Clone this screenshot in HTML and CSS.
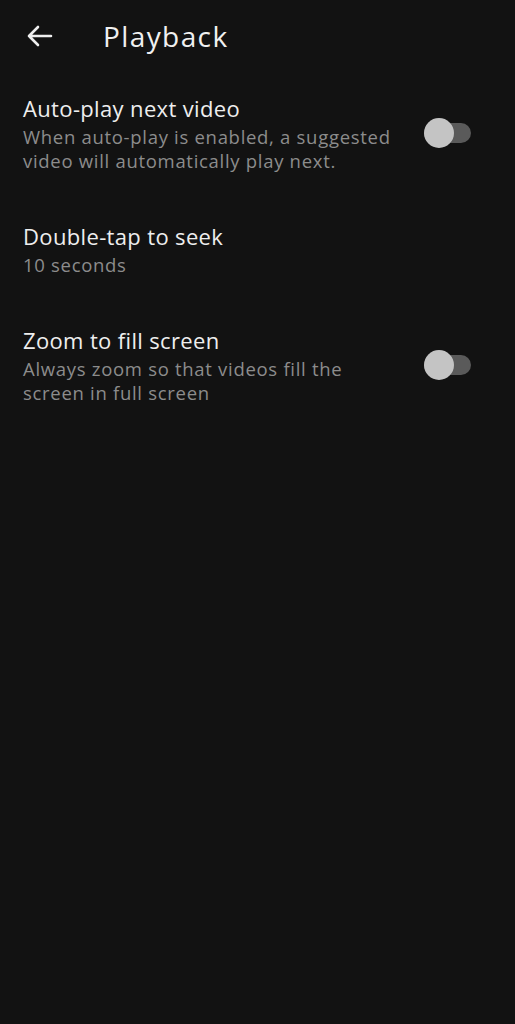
FILE: index.html
```html
<!DOCTYPE html>
<html>
<head>
<meta charset="utf-8">
<link rel="stylesheet" href="styles.css">
</head>
<body>
<div class="screen">
  <header class="topbar">
    <svg class="back" width="28" height="24" viewBox="0 0 28 24">
      <path d="M26 12H4M13 3L4 12l9 9" fill="none" stroke="#eeeeee" stroke-width="2.6" stroke-linecap="round" stroke-linejoin="round"/>
    </svg>
    <h1 class="title">Playback</h1>
  </header>
  <div class="item">
    <div class="text">
      <div class="label">Auto-play next video</div>
      <div class="desc">When auto-play is enabled, a suggested video will automatically play next.</div>
    </div>
    <div class="toggle"><span class="thumb"></span></div>
  </div>
  <div class="item">
    <div class="text">
      <div class="label">Double-tap to seek</div>
      <div class="desc">10 seconds</div>
    </div>
  </div>
  <div class="item">
    <div class="text">
      <div class="label">Zoom to fill screen</div>
      <div class="desc">Always zoom so that videos fill the screen in full screen</div>
    </div>
    <div class="toggle"><span class="thumb"></span></div>
  </div>
</div>
</body>
</html>
```
FILE: styles.css
```css
html, body {
  margin: 0;
  padding: 0;
  background: #121212;
}
.screen {
  width: 515px;
  height: 1024px;
  background: #121212;
  font-family: "Open Sans", "Noto Sans", sans-serif;
  color: #eeeeee;
}
.topbar {
  box-sizing: border-box;
  display: flex;
  align-items: center;
  height: 69px;
  padding: 3px 0 0 25px;
}
.back {
  display: block;
}
.title {
  margin: 0 0 0 50px;
  font-size: 28px;
  font-weight: 500;
  letter-spacing: 1.4px;
  color: #f0f0f0;
}
.item {
  display: flex;
  align-items: center;
  padding: 24px 44px 24px 23px;
}
.text {
  flex: 1;
  max-width: 378px;
}
.label {
  font-size: 22px;
  line-height: 30px;
  letter-spacing: 0.35px;
  color: #eeeeee;
}
.desc {
  margin-top: 2px;
  font-size: 18.5px;
  line-height: 24px;
  letter-spacing: 0.7px;
  color: #8c8c8c;
}
.toggle {
  position: relative;
  width: 47px;
  height: 20px;
  border-radius: 10px;
  background: #5a5a5a;
  margin-left: auto;
}
.thumb {
  position: absolute;
  left: 0;
  top: -5px;
  width: 30px;
  height: 30px;
  border-radius: 50%;
  background: #c4c4c4;
}
```
